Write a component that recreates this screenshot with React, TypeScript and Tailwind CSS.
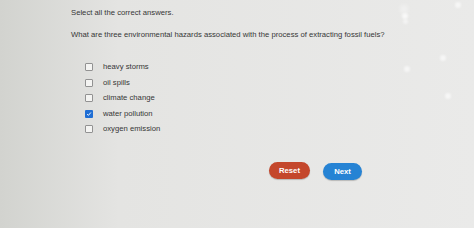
import { FC } from 'react';

interface Option {
  label: string;
  checked: boolean;
}

const options: Option[] = [
  { label: 'heavy storms', checked: false },
  { label: 'oil spills', checked: false },
  { label: 'climate change', checked: false },
  { label: 'water pollution', checked: true },
  { label: 'oxygen emission', checked: false },
];

const Check: FC<{ checked: boolean }> = ({ checked }) =>
  checked ? (
    <span className="flex h-[8px] w-[8px] items-center justify-center rounded-[1px] bg-[#1f6ed4]">
      <svg viewBox="0 0 8 8" className="h-[6px] w-[6px]">
        <path d="M1.5 4.2 L3.2 5.8 L6.5 2" fill="none" stroke="#fff" strokeWidth="1.3" />
      </svg>
    </span>
  ) : (
    <span className="h-[8px] w-[8px] rounded-[1px] border border-[#929292] bg-[#f4f4f2]" />
  );

export default function App() {
  return (
    <div
      className="relative h-[228px] w-[474px] overflow-hidden bg-linear-to-r from-[#d2d3cf] via-[#e4e4e2] via-25% to-[#eaeae9] text-[7.7px] text-[#363636]"
      style={{ fontFamily: '"Liberation Sans", Arial, sans-serif' }}
    >
      {/* screen glare spots */}
      <span className="absolute left-[402px] top-[13px] h-[6px] w-[6px] rounded-full bg-white/70 blur-[1px]" />
      <span className="absolute left-[404px] top-[66px] h-[6px] w-[6px] rounded-full bg-white/60 blur-[1px]" />
      <span className="absolute left-[400px] top-[5px] h-[8px] w-[8px] rounded-full bg-white/40 blur-[2px]" />
      <span className="absolute left-[455px] top-[2px] h-[6px] w-[6px] rounded-full bg-white/60 blur-[1px]" />
      <span className="absolute left-[445px] top-[93px] h-[6px] w-[6px] rounded-full bg-white/60 blur-[1px]" />
      <span className="absolute left-[403px] top-[19px] h-[5px] w-[5px] rounded-full bg-white/50 blur-[1px]" />
      <span className="absolute left-[440px] top-[55px] h-[6px] w-[6px] rounded-full bg-white/60 blur-[1px]" />

      <div className="flex flex-col pl-[71px] pt-[8px]">
        <p className="h-[10px] leading-[10px]">Select all the correct answers.</p>
        <p className="mt-[12px] h-[10px] leading-[10px]">
          What are three environmental hazards associated with the process of extracting fossil fuels?
        </p>

        <ul className="ml-[14px] mt-[22px] flex flex-col gap-[5.6px]">
          {options.map((o) => (
            <li key={o.label} className="flex h-[10px] items-center gap-[10px] leading-[10px]">
              <Check checked={o.checked} />
              <span>{o.label}</span>
            </li>
          ))}
        </ul>
      </div>

      <div className="ml-[269px] mt-[28px] flex items-start gap-[13px]">
        <button className="h-[17px] w-[41px] rounded-full bg-[#c4472c] text-[7.7px] font-bold text-white shadow-[0_1px_1px_rgba(0,0,0,0.2)]">
          Reset
        </button>
        <button className="mt-[1px] h-[17px] w-[39px] rounded-full bg-[#2683d4] text-[7.7px] font-bold text-white shadow-[0_1px_1px_rgba(0,0,0,0.2)]">
          Next
        </button>
      </div>
    </div>
  );
}
